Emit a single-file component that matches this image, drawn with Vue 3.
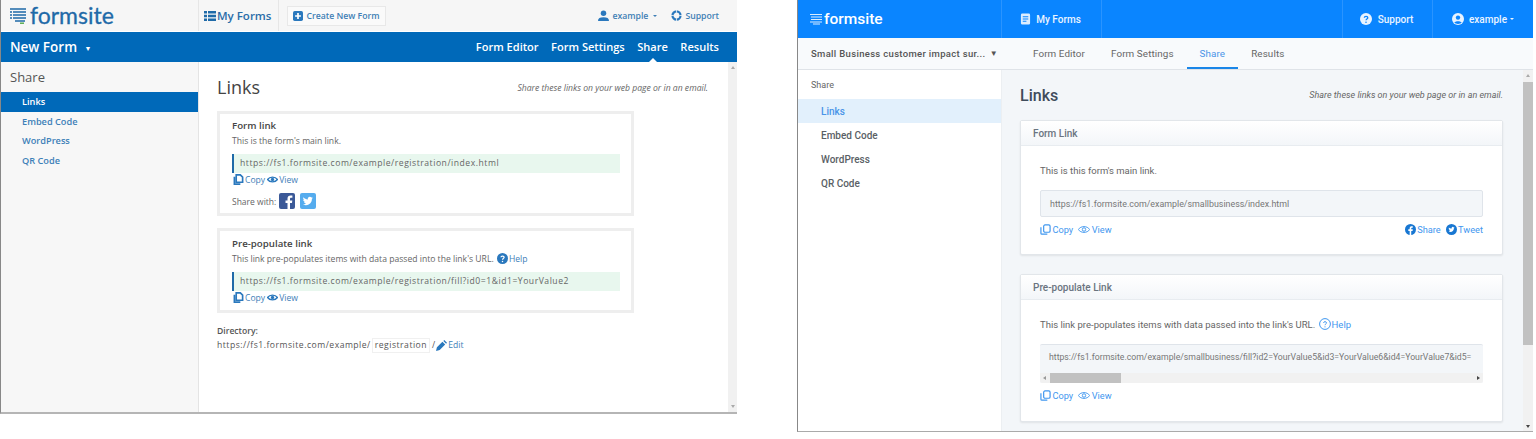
<script setup>
const leftNav = ['Form Editor', 'Form Settings', 'Share', 'Results']
const sideItems = ['Links', 'Embed Code', 'WordPress', 'QR Code']
</script>

<template>
  <div class="canvas">
    <!-- Old interface -->
    <section class="old">
      <header class="o-top">
        <div class="o-brand">
          <svg class="o-mark" viewBox="0 0 16 16" width="16" height="16">
            <path d="M0 1h16M3 4h13M3 7h13M3 10h13M5 13h10" stroke="#1f6aa8" stroke-width="1.600" fill="none" />
            <path d="M0 4h2M0 7h2M0 10h2" stroke="#1f6aa8" stroke-width="1.600" />
            <path d="M10 15.200h4" stroke="#52a94a" stroke-width="1.400" />
          </svg>
          <span class="o-logo">formsite</span>
        </div>
        <div class="o-myforms">
          <svg viewBox="0 0 12 12" width="12" height="12"><path d="M0 1h3v2.400H0zM4 1h8v2.400H4zM0 4.800h3v2.400H0zM4 4.800h8v2.400H4zM0 8.600h3V11H0zM4 8.600h8V11H4z" fill="#1f6aa8" /></svg>
          <span>My Forms</span>
        </div>
        <button class="o-create">
          <svg viewBox="0 0 12 12" width="10" height="10"><rect width="12" height="12" rx="2" fill="#2a78bd" /><path d="M6 2.500v7M2.500 6h7" stroke="#fff" stroke-width="2" /></svg>
          Create New Form
        </button>
        <div class="o-right">
          <span class="o-tool">
            <svg viewBox="0 0 12 12" width="11" height="11"><circle cx="6" cy="3.500" r="3" fill="#2a78bd" /><path d="M0 12c0-3 2-4 6-4s6 1 6 4z" fill="#2a78bd" /></svg>
            example<i class="caret"></i>
          </span>
          <span class="o-tool">
            <svg viewBox="0 0 12 12" width="11" height="11"><circle cx="6" cy="6" r="4.400" fill="none" stroke="#2a78bd" stroke-width="2.400" /><path d="M6 0v3M6 9v3M0 6h3M9 6h3" stroke="#fff" stroke-width=".8" /></svg>
            Support
          </span>
        </div>
      </header>
      <nav class="o-nav">
        <div class="o-form">New Form <small>▼</small></div>
        <div class="o-links">
          <a v-for="n in leftNav" :key="n" :class="{ on: n === 'Share' }">{{ n }}</a>
        </div>
      </nav>
      <div class="o-body">
        <aside class="o-side">
          <h3>Share</h3>
          <a v-for="s in sideItems" :key="s" :class="{ on: s === 'Links' }">{{ s }}</a>
        </aside>
        <main class="o-main">
          <div class="o-head">
            <h1>Links</h1>
            <em>Share these links on your web page or in an email.</em>
          </div>
          <div class="o-card">
            <h4>Form link</h4>
            <p>This is the form's main link.</p>
            <div class="o-url">https://fs1.formsite.com/example/registration/index.html</div>
            <div class="o-actions">
              <svg viewBox="0 0 12 12" width="11" height="11"><path d="M3.500 1H8l2.500 2.500V9h-7zM1.500 3v8H8" fill="none" stroke="#2a78bd" stroke-width="1.800" /></svg><a>Copy</a>
              <svg viewBox="0 0 12 12" width="11" height="11"><path d="M.5 6C3 2.500 9 2.500 11.500 6 9 9.500 3 9.500.5 6z" fill="none" stroke="#2a78bd" stroke-width="1.500" /><circle cx="6" cy="6" r="1.800" fill="#2a78bd" /></svg><a>View</a>
            </div>
            <div class="o-share">
              <span>Share with:</span>
              <svg viewBox="0 0 16 16" width="16" height="16"><rect width="16" height="16" rx="2" fill="#3b5998" /><path d="M11 16v-6h2l.3-2.500H11V6c0-.8.3-1.200 1.200-1.200h1.200V2.600c-.6-.1-1.200-.1-1.800-.1-1.900 0-3.100 1.100-3.100 3.200v1.800H6.500V10h2v6z" fill="#fff" /></svg>
              <svg class="tw" viewBox="0 0 16 16" width="16" height="16"><rect width="16" height="16" rx="2" fill="#55acee" /><path d="M13 4.800c-.4.200-.8.300-1.200.3.400-.3.800-.7.900-1.100-.4.200-.8.400-1.300.5a2.100 2.100 0 0 0-3.600 1.900C6 6.300 4.500 5.500 3.500 4.200c-.6 1-.3 2.200.7 2.800-.3 0-.7-.1-1-.2 0 1 .7 1.900 1.700 2.100-.3.100-.6.100-.9 0 .3.900 1.100 1.400 2 1.500-.9.700-2 1-3 .9 3.800 2.300 9-.3 8.900-5.500.5-.3.800-.6 1.100-1z" fill="#fff" /></svg>
            </div>
          </div>
          <div class="o-card second">
            <h4>Pre-populate link</h4>
            <p>This link pre-populates items with data passed into the link's URL.
              <svg class="help" viewBox="0 0 12 12" width="11" height="11"><circle cx="6" cy="6" r="6" fill="#2a78bd" /><path d="M4.300 4.700C4.400 2.800 7.800 2.900 7.800 4.700 7.800 6 6 6 6 7.300" stroke="#fff" stroke-width="1.300" fill="none" /><circle cx="6" cy="9.300" r=".8" fill="#fff" /></svg><a>Help</a></p>
            <div class="o-url">https://fs1.formsite.com/example/registration/fill?id0=1&amp;id1=YourValue2</div>
            <div class="o-actions">
              <svg viewBox="0 0 12 12" width="11" height="11"><path d="M3.500 1H8l2.500 2.500V9h-7zM1.500 3v8H8" fill="none" stroke="#2a78bd" stroke-width="1.800" /></svg><a>Copy</a>
              <svg viewBox="0 0 12 12" width="11" height="11"><path d="M.5 6C3 2.500 9 2.500 11.500 6 9 9.500 3 9.500.5 6z" fill="none" stroke="#2a78bd" stroke-width="1.500" /><circle cx="6" cy="6" r="1.800" fill="#2a78bd" /></svg><a>View</a>
            </div>
          </div>
          <div class="o-dir">
            <strong>Directory:</strong>
            <div class="o-dirline">
              <span class="sp">https://fs1.formsite.com/example/</span>
              <span class="sp box">registration</span>
              <span>/</span>
              <svg viewBox="0 0 12 12" width="11" height="11"><path d="M0 12l1-4 6-6 3 3-6 6zM8 1l1-1 3 3-1 1z" fill="#2a78bd" /></svg><a>Edit</a>
            </div>
          </div>
        </main>
        <div class="o-scroll"><i></i><i class="down"></i></div>
      </div>
    </section>

    <!-- New interface -->
    <section class="new">
      <header class="n-top">
        <div class="n-brand">
          <svg viewBox="0 0 12 12" width="12" height="12"><path d="M0 1.500h12M1 4h11M1 6.500h11M0 9h12M3 11h7" stroke="#d9ecff" stroke-width="1.200" fill="none" /></svg>
          <span>formsite</span>
        </div>
        <div class="n-cell forms">
          <svg viewBox="0 0 12 12" width="11" height="12"><path d="M2.500 0h7A1.500 1.500 0 0 1 11 1.500v9A1.500 1.500 0 0 1 9.500 12h-7A1.500 1.500 0 0 1 1 10.500v-9A1.500 1.500 0 0 1 2.500 0z" fill="#dcedff" /><path d="M3 3.500h6M3 6h6M3 8.500h4" stroke="#0a85ff" stroke-width="1.100" /></svg>
          My Forms
        </div>
        <div class="n-cell support">
          <svg viewBox="0 0 12 12" width="12" height="12"><circle cx="6" cy="6" r="6" fill="#e8f3ff" /><path d="M4.300 4.700C4.400 2.800 7.800 2.900 7.800 4.700 7.800 6 6 6 6 7.300" stroke="#0a85ff" stroke-width="1.300" fill="none" /><circle cx="6" cy="9.300" r=".8" fill="#0a85ff" /></svg>
          Support
        </div>
        <div class="n-cell user">
          <svg viewBox="0 0 12 12" width="12" height="12"><circle cx="6" cy="6" r="6" fill="#e8f3ff" /><circle cx="6" cy="4.600" r="2.200" fill="#0a85ff" /><path d="M2.400 9.800C3 7.800 9 7.800 9.600 9.800 8 11.300 4 11.300 2.400 9.800z" fill="#0a85ff" /></svg>
          example<i class="caret white"></i>
        </div>
      </header>
      <nav class="n-nav">
        <div class="n-form"><span>Small Business customer impact sur...</span><small>▼</small></div>
        <div class="n-links">
          <a v-for="n in leftNav" :key="n" :class="{ on: n === 'Share' }">{{ n }}</a>
        </div>
      </nav>
      <div class="n-body">
        <aside class="n-side">
          <h3>Share</h3>
          <a v-for="s in sideItems" :key="s" :class="{ on: s === 'Links' }">{{ s }}</a>
        </aside>
        <main class="n-main">
          <div class="n-head">
            <h1>Links</h1>
            <em>Share these links on your web page or in an email.</em>
          </div>
          <div class="n-card">
            <h4>Form Link</h4>
            <div class="n-inner">
              <p>This is this form's main link.</p>
              <div class="n-url">https://fs1.formsite.com/example/smallbusiness/index.html</div>
              <div class="n-actions">
                <svg viewBox="0 0 12 12" width="11" height="11"><rect x="4" y="1" width="7" height="8" rx="1.500" fill="none" stroke="#3f97ef" stroke-width="1.300" /><path d="M1 3.500V10a1 1 0 0 0 1 1h6" fill="none" stroke="#3f97ef" stroke-width="1.300" /></svg><a>Copy</a>
                <svg class="gap" viewBox="0 0 14 12" width="12" height="11"><path d="M.5 6C3 1.500 11 1.500 13.500 6 11 10.500 3 10.500.5 6z" fill="none" stroke="#3f97ef" stroke-width="1.100" /><circle cx="7" cy="6" r="2" fill="none" stroke="#3f97ef" stroke-width="1.100" /></svg><a>View</a>
                <span class="spacer"></span>
                <svg viewBox="0 0 12 12" width="11" height="11"><circle cx="6" cy="6" r="6" fill="#1877d2" /><path d="M6.800 12V7.500h1.500l.2-1.700H6.800V4.800c0-.5.200-.8.800-.8h.9V2.500c-1.800-.3-3.400 0-3.400 2.100v1.200H3.600v1.700h1.500V12z" fill="#fff" /></svg><a>Share</a>
                <svg class="gap" viewBox="0 0 12 12" width="11" height="11"><circle cx="6" cy="6" r="6" fill="#1877d2" /><path d="M9.500 4c-.3.100-.5.200-.8.200.3-.2.500-.4.600-.7-.3.100-.5.200-.8.300a1.300 1.300 0 0 0-2.300 1.200C4.900 5 3.900 4.500 3.200 3.700c-.4.600-.2 1.400.4 1.800-.2 0-.4-.1-.6-.2 0 .6.500 1.200 1.100 1.300H3.500c.2.600.7.900 1.300 1-.6.400-1.300.6-2 .5 2.500 1.500 5.900-.2 5.800-3.500.4-.1.700-.4.900-.6z" fill="#fff" /></svg><a>Tweet</a>
              </div>
            </div>
          </div>
          <div class="n-card">
            <h4>Pre-populate Link</h4>
            <div class="n-inner tight">
              <p>This link pre-populates items with data passed into the link's URL.
                <svg class="help" viewBox="0 0 12 12" width="12" height="12"><circle cx="6" cy="6" r="5.400" fill="none" stroke="#3f97ef" stroke-width="1" /><path d="M4.500 4.800C4.600 3.300 7.500 3.300 7.500 4.800 7.500 6 6 6 6 7.200" stroke="#3f97ef" stroke-width="1" fill="none" /><circle cx="6" cy="8.800" r=".6" fill="#3f97ef" /></svg><a>Help</a></p>
              <div class="n-url long">
                <div class="n-urltext">https://fs1.formsite.com/example/smallbusiness/fill?id2=YourValue5&amp;id3=YourValue6&amp;id4=YourValue7&amp;id5=</div>
                <div class="n-hscroll"><b class="l"></b><i></i><b class="r"></b></div>
              </div>
              <div class="n-actions">
                <svg viewBox="0 0 12 12" width="11" height="11"><rect x="4" y="1" width="7" height="8" rx="1.500" fill="none" stroke="#3f97ef" stroke-width="1.300" /><path d="M1 3.500V10a1 1 0 0 0 1 1h6" fill="none" stroke="#3f97ef" stroke-width="1.300" /></svg><a>Copy</a>
                <svg class="gap" viewBox="0 0 14 12" width="12" height="11"><path d="M.5 6C3 1.500 11 1.500 13.500 6 11 10.500 3 10.500.5 6z" fill="none" stroke="#3f97ef" stroke-width="1.100" /><circle cx="7" cy="6" r="2" fill="none" stroke="#3f97ef" stroke-width="1.100" /></svg><a>View</a>
              </div>
            </div>
          </div>
        </main>
        <div class="n-scroll"><b class="up"></b><i></i><b class="dn"></b></div>
      </div>
    </section>
  </div>
</template>

<style>
html, body { margin: 0; background: #fff; overflow: hidden; }
</style>

<style scoped>
.canvas { display: flex; align-items: flex-start; width: 1536px; height: 439px; background: #fff; overflow: hidden; gap: 60px; }
h1, h3, h4, p { margin: 0; font-weight: 400; }
a { cursor: pointer; }
svg { flex: none; }
.caret { display: inline-block; width: 0; height: 0; border: 2px solid transparent; border-top: 2.500px solid currentColor; border-bottom: 0; margin-left: 2px; vertical-align: middle; }

/* old */
.old { width: 737px; height: 414px; box-sizing: border-box; border-left: 1px solid #888; border-bottom: 2px solid #b5b5b5; font-family: "Open Sans", sans-serif; color: #555; display: flex; flex-direction: column; flex: none; }
.o-top { height: 31px; background: #f6f6f6; display: flex; align-items: stretch; flex: none; }
.o-brand { width: 198px; display: flex; align-items: center; padding-left: 9px; box-sizing: border-box; gap: 4px; border-right: 1px solid #e6e6e6; }
.o-logo { font-size: 23px; line-height: 1; color: #1f6aa8; font-family: "Lato", sans-serif; -webkit-text-stroke: .3px #1f6aa8; }
.o-myforms { width: 80px; box-sizing: border-box; border-right: 1px solid #e6e6e6; display: flex; align-items: center; gap: 1px; padding-left: 5px; font-size: 11.500px; font-weight: 600; color: #2a6da8; }
.o-create { margin: 6px 0 5px 8px; width: 99px; border: 1px solid #e8e8e8; background: #fafafa; color: #3f7fb5; font: 600 8.700px "Open Sans", sans-serif; display: flex; align-items: center; justify-content: center; gap: 3px; padding: 0; }
.o-right { margin-left: auto; display: flex; align-items: center; gap: 14px; padding-right: 18px; font-size: 8.700px; font-weight: 600; color: #3f7fb5; }
.o-tool { display: flex; align-items: center; gap: 3px; }
.o-nav { height: 30px; margin-top: 1px; background: #0069b9; color: #fff; display: flex; align-items: center; justify-content: space-between; padding: 0 18px 0 9px; flex: none; }
.o-form { font-size: 13.500px; font-weight: 600; }
.o-form small { font-size: 7px; margin-left: 4px; vertical-align: 1px; }
.o-links { display: flex; gap: 12.500px; font-size: 11.050px; font-weight: 600; }
.o-links a { position: relative; line-height: 30px; }
.o-links a.on::after { content: ""; position: absolute; left: 50%; bottom: 0; margin-left: -4px; border: 4px solid transparent; border-bottom-color: #fff; border-top: 0; }
.o-body { flex: 1; display: flex; min-height: 0; }
.o-side { width: 198px; box-sizing: border-box; background: #f7f7f7; border-right: 1px solid #e4e4e4; padding-top: 5px; flex: none; }
.o-side h3 { font-size: 13px; line-height: 20px; padding-left: 9px; margin-bottom: 5px; color: #555; }
.o-side a { display: block; height: 19.700px; line-height: 19.700px; padding-left: 21px; font-size: 9.200px; font-weight: 600; color: #3d80b8; }
.o-side a.on { background: #0069b9; color: #fff; }
.o-main { flex: 1; padding: 0 0 0 18px; min-width: 0; }
.o-head { display: flex; align-items: center; justify-content: space-between; height: 49px; padding-right: 20px; }
.o-head h1 { font-size: 18px; color: #444; }
.o-head em { font-size: 8.600px; color: #666; position: relative; top: 1px; }
.o-card { width: 417px; box-sizing: border-box; border: 3px solid #eee; padding: 3px 11px 0 12px; height: 105px; }
.o-card.second { height: 85px; margin-top: 12px; padding-top: 4px; }
.o-card h4 { font-size: 9.700px; height: 16px; line-height: 18px; font-weight: 600; color: #444; }
.o-card p { font-size: 8.600px; line-height: 16px; color: #666; }
.help { vertical-align: -2px; margin: 0 1px 0 1px; }
.o-card p a, .o-actions a, .o-dir a { color: #3f80b8; }
.o-url { margin: 5px 0 0; height: 19px; line-height: 19px; border-left: 2px solid #1f6aa8; background: #e8f7ee; padding-left: 6px; font-size: 8.600px; letter-spacing: .53px; color: #666; white-space: nowrap; }
.o-actions { display: flex; align-items: center; gap: 1px; height: 13px; font-size: 8.600px; padding-left: 1px; }
.o-actions a { margin-right: 1px; }
.o-share { display: flex; align-items: center; gap: 3px; height: 18px; margin-top: 6px; font-size: 8.500px; color: #666; }
.tw { margin-left: 2px; }
.o-dir { margin-top: 12px; font-size: 8.600px; line-height: 13px; color: #555; }
.o-dir strong { font-weight: 600; display: block; }
.o-dirline { display: flex; align-items: center; gap: 1px; }
.sp { letter-spacing: .5px; }
.box { border: 1px solid #f0f0f0; padding: 0 2px; margin-right: 1px; }
.o-scroll { width: 9px; background: #f1f1f1; display: flex; flex-direction: column; justify-content: space-between; align-items: center; padding: 4px 0; flex: none; }
.o-scroll i { width: 0; height: 0; border: 2.500px solid transparent; border-bottom: 3px solid #aaa; border-top: 0; }
.o-scroll i.down { border-bottom: 0; border-top: 3px solid #aaa; }

/* new */
.new { width: 736px; height: 432px; box-sizing: border-box; border-left: 1px solid #888; border-bottom: 1px solid #aaa; font-family: Roboto, sans-serif; color: #555; display: flex; flex-direction: column; flex: none; overflow: hidden; }
.n-top { height: 38px; background: #0a85ff; color: #eaf4ff; display: flex; flex: none; font-size: 10px; font-weight: 500; }
.n-brand { width: 204px; box-sizing: border-box; display: flex; align-items: center; gap: 2px; padding-left: 12px; color: #fff; font-size: 15.500px; border-right: 1px solid #2a94ff; }
.n-cell { display: flex; align-items: center; gap: 7px; box-sizing: border-box; }
.forms { width: 100px; justify-content: center; gap: 5px; padding-right: 2px; border-right: 1px solid #2a94ff; }
.support { margin-left: auto; width: 91px; justify-content: center; gap: 6px; padding-right: 2px; border-left: 1px solid #2a94ff; border-right: 1px solid #2a94ff; }
.user { width: 100px; justify-content: center; gap: 5px; }
.user .caret { margin-left: -2px; }
.n-nav { height: 32px; background: #f8fafc; border-bottom: 1px solid #dfe3e8; display: flex; box-sizing: border-box; flex: none; }
.n-form { width: 204px; box-sizing: border-box; display: flex; align-items: center; justify-content: space-between; padding: 0 4px 0 13px; font-size: 9.500px; font-weight: 500; letter-spacing: .32px; color: #555; white-space: nowrap; }
.n-form small { font-size: 8px; }
.n-links { display: flex; font-size: 9.850px; letter-spacing: .1px; padding-left: 18px; }
.n-links a { padding: 0 13px; line-height: 31px; color: #666; box-sizing: border-box; height: 31px; }
.n-links a.on { color: #4a94e8; border-bottom: 2px solid #1a86e8; }
.n-body { flex: 1; display: flex; min-height: 0; }
.n-side { width: 204px; box-sizing: border-box; background: #fff; border-right: 1px solid #eceff2; padding-top: 6px; flex: none; }
.n-side h3 { font-size: 9px; line-height: 18px; padding-left: 13px; margin-bottom: 5px; color: #666; }
.n-side a { display: block; height: 24px; line-height: 26px; padding-left: 23px; font-size: 10px; font-weight: 500; color: #5a5f66; }
.n-side a.on { background: #e2f0fc; color: #4a94e8; }
.n-main { flex: 1; background: #f3f6f9; padding: 0 20px 0 18px; min-width: 0; }
.n-head { display: flex; align-items: center; justify-content: space-between; height: 50px; }
.n-head h1 { font-size: 16px; font-weight: 500; color: #3e4b5b; }
.n-head em { font-size: 9px; color: #666; }
.n-card { background: #fff; border: 1px solid #e2e6ea; border-radius: 2px; box-shadow: 0 1px 2px rgba(0,0,0,.08); margin-bottom: 19px; }
.n-card h4 { height: 24px; line-height: 25px; padding-left: 12px; font-size: 10px; font-weight: 500; color: #6a7480; background: linear-gradient(#fff, #f3f6f9); border-bottom: 1px solid #e8ecf0; }
.n-inner { padding: 19px 19px 0; }
.n-inner.tight { padding-top: 18px; }
.n-inner p { font-size: 9.500px; line-height: 12px; color: #666; }
.n-inner p a { color: #3f97ef; }
.n-url { margin-top: 13px; height: 27px; line-height: 26px; box-sizing: border-box; border: 1px solid #dfe4ea; border-radius: 2px; background: #f3f6f9; padding-left: 9px; font-size: 8.870px; color: #777; overflow: hidden; white-space: nowrap; }
.n-url.long { height: 39px; padding: 0; border-width: 1px 0 0; font-size: 8.700px; }
.n-urltext { padding-left: 9px; height: 28px; line-height: 25px; }
.n-hscroll { height: 10px; background: #f1f1f1; display: flex; align-items: center; padding: 0 3px; }
.n-hscroll i { width: 71px; height: 10px; background: #c1c1c1; margin: 0 auto 0 4px; }
.n-hscroll b { width: 0; height: 0; border: 2.500px solid transparent; }
.n-hscroll .l { border-left: 0; border-right: 3px solid #999; }
.n-hscroll .r { border-right: 0; border-left: 3px solid #444; }
.n-actions { display: flex; align-items: center; gap: 1px; height: 12px; padding-bottom: 19px; font-size: 9.200px; color: #3f97ef; }
.n-url + .n-actions { margin-top: 6px; }
.n-url.long + .n-actions { margin-top: 6px; padding-bottom: 20px; }
.n-actions a { margin-left: .5px; }
.gap { margin-left: 4px; }
.spacer { flex: 1; }
.n-scroll { width: 10px; background: #f1f1f1; flex: none; padding-top: 12px; position: relative; }
.n-scroll i { display: block; height: 263px; background: #c1c1c1; }
.n-scroll b { position: absolute; left: 2.500px; width: 0; height: 0; border: 2.500px solid transparent; }
.n-scroll .up { top: 4px; border-top: 0; border-bottom: 3px solid #aaa; }
.n-scroll .dn { bottom: 3px; border-bottom: 0; border-top: 3px solid #444; }
</style>
